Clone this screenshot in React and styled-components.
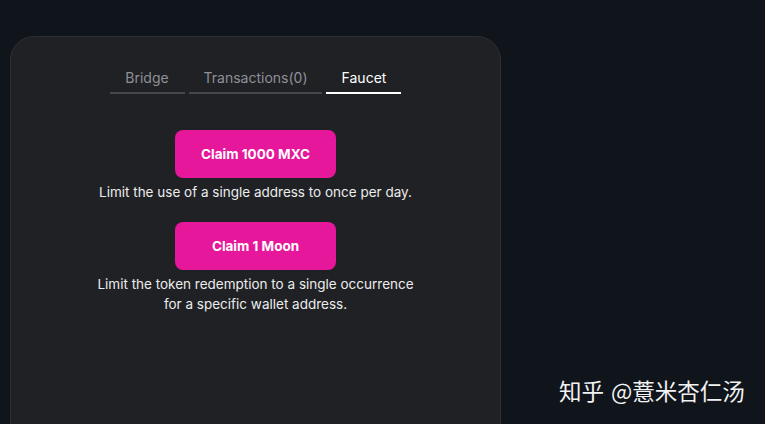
import React from "react";
import styled, { createGlobalStyle } from "styled-components";

const GlobalStyle = createGlobalStyle`
  html, body {
    margin: 0;
    padding: 0;
    background: #10141b;
    height: 100%;
    overflow: hidden;
  }
  body {
    font-family: Inter, "Noto Sans", sans-serif;
    color: #ececec;
  }
`;

const Page = styled.div`
  position: relative;
  width: 765px;
  height: 424px;
  padding: 36px 0 0 10px;
  box-sizing: border-box;
  overflow: hidden;
`;

const Card = styled.div`
  flex-shrink: 0;
  width: 491px;
  height: 460px;
  box-sizing: border-box;
  background: #202125;
  border: 1px solid #2b2f37;
  border-radius: 24px;
  padding-top: 31px;
  display: flex;
  flex-direction: column;
  align-items: center;
`;

const Tabs = styled.div`
  display: flex;
  gap: 4px;
`;

const Tab = styled.div`
  min-width: 75px;
  box-sizing: border-box;
  padding: 0 15px 4px;
  font-size: 14px;
  line-height: 20px;
  text-align: center;
  color: ${p => (p.$active ? "#ffffff" : "#8f9096")};
  border-bottom: 2px solid ${p => (p.$active ? "#ffffff" : "#46474c")};
`;

const Section = styled.div`
  display: flex;
  flex-direction: column;
  align-items: center;
  margin-top: ${p => p.$top}px;
`;

const ClaimButton = styled.button`
  width: 161px;
  height: 48px;
  border: none;
  border-radius: 8px;
  background: #e6179b;
  color: #ffffff;
  font-family: Inter, "Noto Sans", sans-serif;
  font-weight: 700;
  font-size: 13.5px;
  cursor: pointer;
`;

const Note = styled.p`
  margin: 4px 0 0;
  font-size: 13.5px;
  line-height: 20px;
  text-align: center;
  color: #ececec;
`;

const Watermark = styled.div`
  position: absolute;
  left: 559px;
  top: 375px;
  display: flex;
  gap: 7px;
  font-family: "Noto Sans CJK SC", sans-serif;
  font-size: 22.5px;
  line-height: 30px;
  color: #f2f2f2;
  white-space: nowrap;
`;

export default function App() {
  return (
    <Page>
      <GlobalStyle />
      <Card>
        <Tabs>
          <Tab>Bridge</Tab>
          <Tab>Transactions(0)</Tab>
          <Tab $active>Faucet</Tab>
        </Tabs>
        <Section $top={36}>
          <ClaimButton>Claim 1000 MXC</ClaimButton>
          <Note>Limit the use of a single address to once per day.</Note>
        </Section>
        <Section $top={20}>
          <ClaimButton>Claim 1 Moon</ClaimButton>
          <Note>
            Limit the token redemption to a single occurrence
            <br />
            for a specific wallet address.
          </Note>
        </Section>
      </Card>
      <Watermark>
        <span>知乎</span>
        <span>@薏米杏仁汤</span>
      </Watermark>
    </Page>
  );
}
